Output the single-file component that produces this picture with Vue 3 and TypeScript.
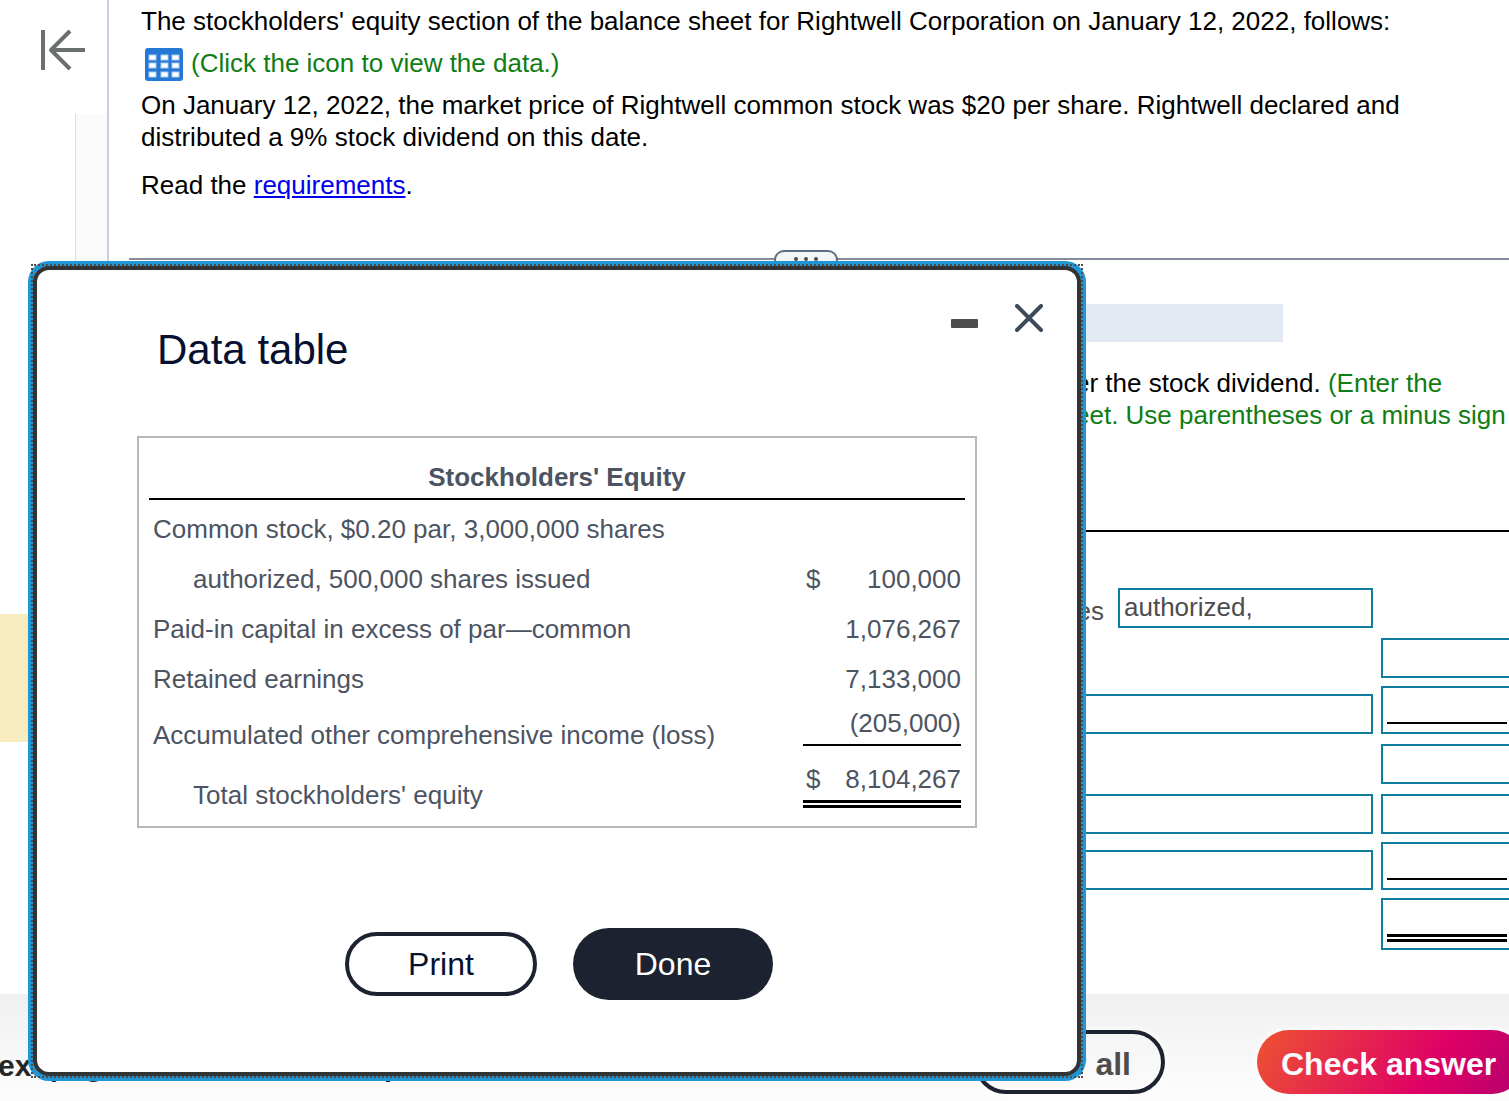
<script setup lang="ts">
import { ref } from 'vue'

interface EquityRow {
  label: string
  amount?: string
  dollar?: boolean
  indent?: boolean
  rule?: 'single' | 'double'
}

interface AnswerRow {
  label?: string
  entry?: 'short' | 'long'
  amount?: 'plain' | 'single' | 'double'
}

const equityRows: EquityRow[] = [
  { label: 'Common stock, $0.20 par, 3,000,000 shares' },
  { label: 'authorized, 500,000 shares issued', amount: '100,000', dollar: true, indent: true },
  { label: 'Paid-in capital in excess of par—common', amount: '1,076,267' },
  { label: 'Retained earnings', amount: '7,133,000' },
  { label: 'Accumulated other comprehensive income (loss)', amount: '(205,000)', rule: 'single' },
  { label: "Total stockholders' equity", amount: '8,104,267', dollar: true, indent: true, rule: 'double' },
]

const answerRows: AnswerRow[] = [
  { label: 'shares', entry: 'short' },
  { amount: 'plain' },
  { entry: 'long', amount: 'single' },
  { amount: 'plain' },
  { entry: 'long', amount: 'plain' },
  { entry: 'long', amount: 'single' },
  { amount: 'double' },
]

const entries = ref<string[]>(['authorized,', '', '', '', '', '', ''])
const amounts = ref<string[]>(['', '', '', '', '', '', ''])
</script>

<template>
  <div class="page">
    <div class="workspace">
      <aside class="rail">
        <button class="collapse" type="button" aria-label="Collapse">
          <svg width="48" height="44" viewBox="0 0 48 44" fill="none" stroke="#6a706f" stroke-width="4">
            <path d="M4 2V42M46 22H12" />
            <path d="M31 3L12 22L31 41" stroke-linejoin="round" />
          </svg>
        </button>
        <div class="rail-body">
          <div class="marker-column"><div class="marker"></div></div>
          <div class="gutter"></div>
        </div>
      </aside>

      <main class="content">
        <section class="prompt">
          <p>The stockholders' equity section of the balance sheet for Rightwell Corporation on January 12, 2022, follows:</p>
          <p class="data-line">
            <button class="data-icon" type="button" aria-label="View the data">
              <svg width="38" height="33" viewBox="0 0 38 33">
                <rect width="38" height="33" rx="3" fill="#2678d6" />
                <g fill="#fff" stroke="#a9cbf0" stroke-width="1">
                  <rect x="4" y="7" width="7" height="5" /><rect x="16" y="7" width="7" height="5" /><rect x="27" y="7" width="7" height="5" />
                  <rect x="4" y="15" width="7" height="5" /><rect x="16" y="15" width="7" height="5" /><rect x="27" y="15" width="7" height="5" />
                  <rect x="4" y="24" width="7" height="5" /><rect x="16" y="24" width="7" height="5" /><rect x="27" y="24" width="7" height="5" />
                </g>
              </svg>
            </button>
            <span class="hint">(Click the icon to view the data.)</span>
          </p>
          <p>On January 12, 2022, the market price of Rightwell common stock was $20 per share. Rightwell declared and distributed a 9% stock dividend on this date.</p>
          <p class="read">Read the <a href="#requirements">requirements</a>.</p>
        </section>

        <div class="divider">
          <button class="handle" type="button" aria-label="Resize">
            <svg width="24" height="4" viewBox="0 0 24 4" fill="#4d4d4d">
              <circle cx="2" cy="2" r="2" /><circle cx="12" cy="2" r="2" /><circle cx="22" cy="2" r="2" />
            </svg>
          </button>
        </div>

        <section class="question">
          <div class="step-bar"></div>
          <p class="instruction">
            er the stock dividend. <span class="hint">(Enter the<br />eet. Use parentheses or a minus sign</span>
          </p>
          <div class="answers">
            <div v-for="(row, i) in answerRows" :key="i" class="answer-row">
              <label v-if="row.label" class="answer-label" :for="'entry-' + i">{{ row.label }}</label>
              <input
                v-if="row.entry"
                :id="'entry-' + i"
                v-model="entries[i]"
                :class="['entry', row.entry]"
                type="text"
                :aria-label="row.label ? undefined : 'Account ' + i"
              />
              <div :class="['amount-box', row.amount ?? 'none']">
                <input v-if="row.amount" v-model="amounts[i]" type="text" :aria-label="'Amount ' + i" />
              </div>
            </div>
          </div>
        </section>
      </main>
    </div>

    <footer class="footer">
      <nav class="tools">
        <a href="#pages">ext pages</a>
        <a href="#help">Get more help</a>
      </nav>
      <button class="clear" type="button">Clear all</button>
      <button class="check" type="button">Check answer</button>
    </footer>

    <div class="dialog" role="dialog" aria-labelledby="dialog-title">
      <header class="dialog-head">
        <h2 id="dialog-title">Data table</h2>
        <div class="window-buttons">
          <button type="button" aria-label="Minimize">
            <svg width="28" height="28" viewBox="0 0 28 28"><rect y="15" width="27" height="9" rx="1" fill="#4d4d4d" /></svg>
          </button>
          <button type="button" aria-label="Close">
            <svg width="28" height="28" viewBox="0 0 28 28" fill="none" stroke="#3d4a59" stroke-width="4" stroke-linecap="round">
              <path d="M2 2L26 26M26 2L2 26" />
            </svg>
          </button>
        </div>
      </header>

      <div class="table-frame">
        <table>
          <thead>
            <tr><th colspan="2">Stockholders' Equity</th></tr>
          </thead>
          <tbody>
            <tr v-for="row in equityRows" :key="row.label" :class="row.rule">
              <td :class="['name', { indent: row.indent }]">{{ row.label }}</td>
              <td class="value">
                <div v-if="row.amount" class="figure">
                  <span>{{ row.dollar ? '$' : '' }}</span><span>{{ row.amount }}</span>
                </div>
              </td>
            </tr>
          </tbody>
        </table>
      </div>

      <div class="dialog-actions">
        <button class="print" type="button">Print</button>
        <button class="done" type="button">Done</button>
      </div>
    </div>
  </div>
</template>

<style>
body {
  margin: 0;
  background: #fff;
}
</style>

<style scoped>
.page {
  position: relative;
  display: flex;
  flex-direction: column;
  min-height: 100vh;
  overflow: hidden;
  font-family: "Liberation Sans", Arial, sans-serif;
  font-size: 26px;
  line-height: 32px;
  color: #000;
}
.page * {
  box-sizing: border-box;
}
p,
h2 {
  margin: 0;
}
button {
  padding: 0;
  border: 0;
  background: none;
  font: inherit;
}
svg {
  display: block;
}
input {
  font: inherit;
  color: #4d4d4d;
  background: #fff;
  border-radius: 0;
  outline: none;
}
.hint {
  color: #0f7d14;
}

.workspace {
  flex: 1;
  display: flex;
}
.rail {
  flex: none;
  width: 107px;
  display: flex;
  flex-direction: column;
}
.collapse {
  height: 114px;
  padding: 28px 0 0 39px;
  display: flex;
  align-items: flex-start;
}
.rail-body {
  flex: 1;
  display: flex;
}
.marker-column {
  width: 75px;
  padding-top: 500px;
}
.marker {
  height: 128px;
  background: #f9ebc0;
}
.gutter {
  flex: 1;
  border-left: 1px solid #dedede;
  background: #fafafa;
}

.content {
  flex: 1;
  min-width: 0;
  border-left: 2px solid #c8cddf;
}
.prompt {
  padding: 5px 32px 0;
}
.data-line {
  display: flex;
  align-items: center;
  gap: 8px;
  height: 32px;
  margin: 10px 0;
  padding-left: 4px;
}
.data-icon {
  padding-top: 2px;
}
.read {
  margin-top: 16px;
}
a {
  color: #0000ee;
}
.divider {
  position: relative;
  height: 2px;
  margin: 57px 0 0 20px;
  background: #858c9f;
}
.handle {
  position: absolute;
  left: 645px;
  top: -8px;
  width: 64px;
  height: 20px;
  display: flex;
  justify-content: center;
  padding-top: 5px;
  border: 2px solid #5d6f80;
  border-radius: 10px;
  background: #f3f5f7;
}

.step-bar {
  height: 38px;
  margin: 44px 226px 25px 20px;
  background: #e2e9f3;
}
.instruction {
  width: 434px;
  margin-left: auto;
  white-space: nowrap;
}
.answers {
  display: flex;
  flex-direction: column;
  gap: 8px;
  margin: 99px -4px 0 20px;
  padding: 54px 0 44px;
  border-top: 2px solid #000;
}
.answer-row {
  display: flex;
  justify-content: flex-end;
  align-items: flex-end;
  gap: 8px;
}
.answer-label {
  padding: 0 6px 1px 0;
  color: #4d4d4d;
}
.entry {
  height: 40px;
  padding: 0 4px 2px;
  border: 2px solid #0f7b9d;
}
.short {
  width: 255px;
}
.long {
  width: 373px;
}
.amount-box {
  width: 132px;
  padding: 0 4px;
  border: 2px solid #0f7b9d;
}
.amount-box input {
  display: block;
  width: 100%;
  height: 36px;
  padding: 0;
  border: 0;
}
.plain,
.none {
  height: 40px;
  margin-top: 2px;
}
.none {
  border-color: transparent;
}
.single.amount-box {
  padding-bottom: 8px;
}
.single.amount-box input {
  border-bottom: 2px solid #000;
}
.double.amount-box {
  padding-bottom: 6px;
}
.double.amount-box input {
  height: 42px;
  border-bottom: 8px double #000;
}

.footer {
  display: flex;
  align-items: flex-start;
  height: 107px;
  padding-top: 36px;
  background: linear-gradient(#f0f0f0, #fdfdfd);
  white-space: nowrap;
}
.tools {
  display: flex;
  gap: 64px;
  margin-left: -2px;
  padding-top: 20px;
}
.tools a {
  font-size: 30px;
  font-weight: bold;
  color: #262626;
  text-decoration: none;
}
.clear,
.check {
  height: 64px;
  border-radius: 32px;
  font-size: 32px;
  font-weight: bold;
  box-shadow: 0 0 0 4px rgba(255, 255, 255, 0.4);
}
.clear {
  margin-left: auto;
  padding: 4px 30px 0 28px;
  border: 4px solid #1c222f;
  color: #4d4d4d;
}
.check {
  width: 267px;
  margin: 0 -15px 0 92px;
  padding: 4px 0 0 24px;
  text-align: left;
  color: #fafaff;
  background: linear-gradient(120deg, #ec4d35 5%, #df0066 65%, #b4006d);
}

.dialog {
  position: absolute;
  top: 266px;
  left: 33px;
  width: min(1048px, calc(100% - 66px));
  padding: 34px 100px 72px;
  border: 4px solid #333;
  border-radius: 16px;
  background: #fff;
  box-shadow: 0 0 0 5px #2097d4;
}
.dialog::after {
  content: "";
  position: absolute;
  inset: -6px;
  border: 2px dotted #4d4d4d;
  pointer-events: none;
}
.dialog-head {
  display: flex;
  justify-content: space-between;
  margin-right: -66px;
  padding-left: 20px;
}
h2 {
  padding-top: 20px;
  font-size: 42px;
  font-weight: normal;
  line-height: 52px;
  color: #07102f;
}
.window-buttons {
  display: flex;
  align-items: flex-start;
  gap: 36px;
}
.table-frame {
  margin-top: 60px;
  padding: 10px 10px 2px;
  border: 2px solid #b9b9b9;
  color: #4c5462;
}
table {
  width: 100%;
  border-collapse: separate;
  border-spacing: 0;
}
th {
  height: 52px;
  padding: 10px 0 2px;
  border-bottom: 2px solid #000;
}
tbody::before {
  content: "";
  display: block;
  height: 4px;
}
td {
  height: 50px;
  padding: 0 4px;
}
.name.indent {
  padding-left: 44px;
}
.value {
  width: 166px;
}
.figure {
  display: flex;
  justify-content: space-between;
  padding-left: 3px;
  line-height: 30px;
}
.single td,
.double td {
  height: 60px;
}
.single .name,
.double .name {
  padding-top: 2px;
}
.single .value {
  padding-top: 4px;
  vertical-align: top;
}
.double .value {
  vertical-align: top;
}
.single .figure {
  padding-bottom: 6px;
  border-bottom: 2px solid #000;
}
.double .figure {
  padding-bottom: 6px;
  border-bottom: 8px double #000;
}
.dialog-actions {
  display: flex;
  justify-content: center;
  align-items: center;
  gap: 36px;
  margin-top: 100px;
  padding-left: 4px;
}
.print,
.done {
  font-size: 32px;
}
.print {
  width: 192px;
  height: 64px;
  border: 4px solid #1c222f;
  border-radius: 32px;
  color: #07102f;
}
.done {
  width: 200px;
  height: 72px;
  border-radius: 36px;
  background: #1c222f;
  color: #fff;
}
</style>
